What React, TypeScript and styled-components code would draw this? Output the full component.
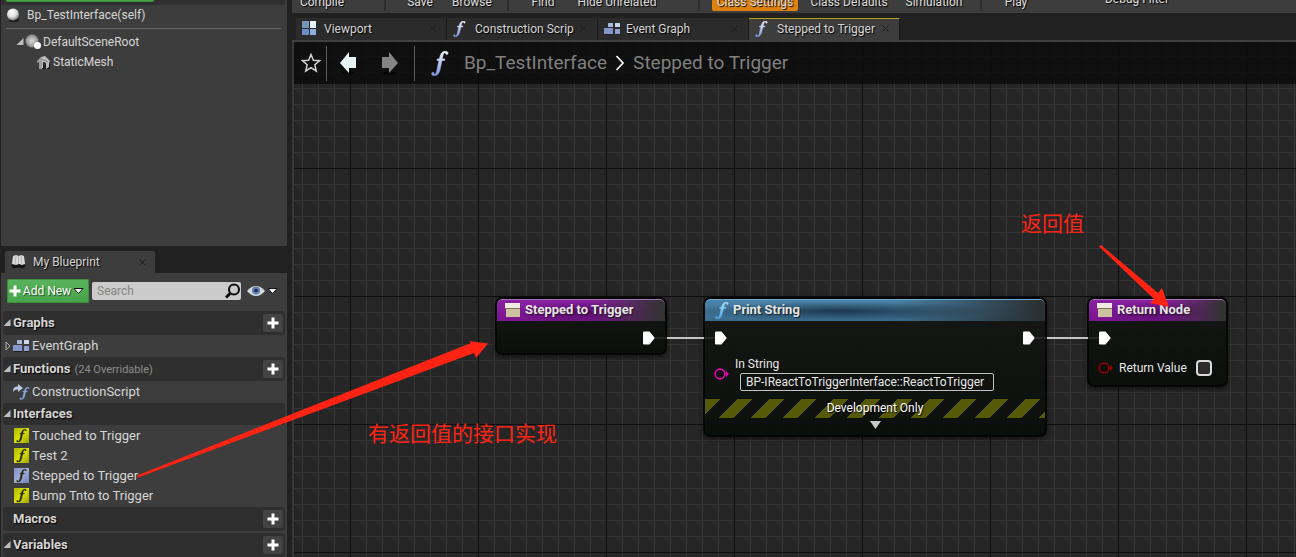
import React from "react";
import styled, { createGlobalStyle, css } from "styled-components";

const Global = createGlobalStyle`
  *, *::before, *::after { box-sizing: border-box; }
  body { margin: 0; background: #212121; overflow: hidden; }
  button, input { font: inherit; color: inherit; }
  ul { list-style: none; margin: 0; padding: 0; }
  h2, h3, p { margin: 0; font: inherit; }
`;

const Page = styled.div`
  position: relative;
  display: grid;
  grid-template-columns: 287px minmax(0, 1fr);
  column-gap: 5px;
  height: 100vh;
  overflow: hidden;
  background: #212121;
  color: #d6d6d6;
  font: 13px/20px Roboto, "Noto Sans CJK SC", sans-serif;
`;

const Sidebar = styled.aside`
  display: flex;
  flex-direction: column;
  padding-left: 1px;
  min-height: 0;
`;

const ComponentsPanel = styled.section`
  height: 246px;
  flex: none;
  background: #3d3d3d;
  font-size: 12px;
`;

const AddComponentBar = styled.div`
  height: 5px;
  display: flex;
  align-items: flex-end;
  padding: 0 0 3px 5px;
  margin-right: 2px;
  overflow: hidden;
  background: #303030;
`;

const AddComponentButton = styled.button`
  width: 148px;
  height: 22px;
  flex: none;
  padding: 0;
  border: 0;
  border-bottom: 1px solid #3c8f3f;
  border-radius: 2px;
  background: #4aa64d;
`;

const SelfRow = styled.div`
  display: flex;
  align-items: center;
  gap: 7px;
  height: 24px;
  margin: 0 6px 3px 5px;
  padding-bottom: 4px;
  border-bottom: 1px solid #6a6a6a;
`;

const Tree = styled.ul``;

const TreeRow = styled.li<{ $indent: number }>`
  display: flex;
  align-items: center;
  gap: 1px;
  height: 20px;
  padding-left: ${(p) => p.$indent}px;
`;

const BlueprintTabs = styled.div`
  display: flex;
  padding: 5px 0 0 4px;
  flex: none;
`;

const BlueprintTab = styled.div`
  display: flex;
  align-items: center;
  width: 150px;
  height: 22px;
  padding: 0 8px 0 6px;
  gap: 7px;
  border-radius: 2px 2px 0 0;
  background: #3d3d3d;
  font-size: 12px;
  text-shadow: 1px 1px 1px #000;
`;

const CloseButton = styled.button`
  margin-left: auto;
  width: 9px;
  height: 9px;
  flex: none;
  display: flex;
  padding: 0;
  border: 0;
  background: none;
  color: #181818;
`;

const BlueprintPanel = styled.section`
  flex: 1;
  min-height: 0;
  background: #3d3d3d;
  overflow: hidden;
`;

const SearchBar = styled.div`
  display: flex;
  align-items: center;
  height: 38px;
  padding: 0 8px 2px 6px;
  gap: 3px;
`;

const AddNew = styled.button`
  display: flex;
  align-items: center;
  justify-content: space-between;
  width: 82px;
  flex: none;
  height: 24px;
  padding: 0 4px 0 1px;
  border: 1px solid #3c9140;
  border-radius: 1px;
  background: linear-gradient(#58b25b, #48a44b);
  color: #fff;
  font-size: 12px;
  white-space: nowrap;
  text-shadow: 1px 1px 1px #244f25;
`;

const SearchField = styled.label`
  display: flex;
  align-items: center;
  width: 149px;
  flex: none;
  height: 18px;
  padding: 0 1px 0 5px;
  border-radius: 2px;
  background: #cbcbcb;
`;

const SearchInput = styled.input`
  flex: 1;
  min-width: 0;
  height: 18px;
  padding: 0;
  border: 0;
  outline: 0;
  background: none;
  font-size: 12px;
  color: #222;
  &::placeholder { color: #858585; opacity: 1; }
`;

const ViewButton = styled.button`
  display: flex;
  align-items: center;
  gap: 2px;
  margin-left: 3px;
  padding: 0;
  border: 0;
  background: none;
`;

const SectionHead = styled.h3<{ $compact?: boolean }>`
  display: flex;
  align-items: center;
  height: ${(p) => (p.$compact ? 22 : 24)}px;
  margin: 0 2px;
  padding-right: 2px;
  border-radius: 3px;
  background: #2f2f2f;
  font-weight: 700;
  text-shadow: 1px 1px 1px #000;
`;

const Twisty = styled.span`
  width: 10px;
  height: 12px;
  display: flex;
  align-items: center;
`;

const Hint = styled.span`
  margin-left: 4px;
  padding-top: 2px;
  font-size: 11px;
  font-weight: 400;
  color: #8c8c8c;
  text-shadow: none;
`;

const PlusButton = styled.button`
  display: flex;
  align-items: center;
  justify-content: center;
  width: 20px;
  height: 18px;
  margin-left: auto;
  padding: 0;
  border: 0;
  border-radius: 2px;
  background: #434343;
`;

const ItemList = styled.ul`
  padding: 1px 0;
`;

const Item = styled.li<{ $expandable?: boolean }>`
  display: flex;
  align-items: center;
  gap: 2px;
  height: 20px;
  padding-left: ${(p) => (p.$expandable ? 4 : 11)}px;
`;

const Spacer = styled.div`
  height: 2px;
`;

const Main = styled.main`
  display: flex;
  flex-direction: column;
  min-width: 0;
  min-height: 0;
`;

const Toolbar = styled.nav`
  display: flex;
  align-items: flex-end;
  height: 13px;
  flex: none;
  overflow: hidden;
  background: #3d3d3d;
  font-size: 12px;
  line-height: 16px;
  color: #dedede;
  text-shadow: 1px 1px 1px #000;
`;

const ToolButton = styled.button<{ $w: number; $active?: boolean; $raised?: boolean }>`
  display: flex;
  justify-content: center;
  width: ${(p) => p.$w}px;
  flex: none;
  height: 18px;
  margin-bottom: ${(p) => (p.$raised ? 5 : 2)}px;
  padding: 1px 0;
  border: 0;
  border-radius: 2px;
  background: ${(p) => (p.$active ? "#de820d" : "none")};
  text-shadow: inherit;
  white-space: nowrap;
`;

const DebugGroup = styled.div`
  display: flex;
  margin-left: 48px;
`;

const ToolDivider = styled.span<{ $before: number; $after: number }>`
  width: 2px;
  flex: none;
  height: 11px;
  margin: 0 ${(p) => p.$after}px 2px ${(p) => p.$before}px;
  background: #2d2d2d;
`;

const TabStrip = styled.div`
  display: flex;
  height: 29px;
  flex: none;
  padding: 5px 0 0 4px;
  border-bottom: 2px solid #414141;
`;

const Tab = styled.div<{ $active?: boolean }>`
  display: flex;
  align-items: center;
  width: 151px;
  flex: none;
  padding: 0 9px 2px 6px;
  border-right: 1px solid #1a1a1a;
  background: ${(p) => (p.$active ? "#3d3d3d" : "#2b2b2b")};
  border-top: 1px solid ${(p) => (p.$active ? "#b9a116" : "#2b2b2b")};
  font-size: 12px;
  text-shadow: 1px 1px 1px #000;
  white-space: nowrap;
`;

const TabIcon = styled.span`
  display: flex;
  width: 22px;
`;

const GraphFrame = styled.div`
  display: flex;
  flex: 1;
  min-height: 0;
  padding-left: 2px;
  background: #383838;
`;

const Graph = styled.section`
  position: relative;
  flex: 1;
  min-width: 0;
  overflow: hidden;
  background-color: #262626;
  background-image:
    linear-gradient(90deg, #0d0d0d 1px, transparent 1px),
    linear-gradient(#0d0d0d 1px, transparent 1px),
    linear-gradient(90deg, #353535 1px, transparent 1px),
    linear-gradient(#353535 1px, transparent 1px);
  background-size: 128px 128px, 128px 128px, 16px 16px, 16px 16px;
  background-position: 56px 0, 0 126px, 8px 0, 0 14px;
`;

const Crumbs = styled.header`
  display: flex;
  align-items: center;
  height: 42px;
  padding-left: 6px;
  background: rgba(10, 10, 10, 0.8);
  font-size: 19px;
  line-height: 24px;
  color: #808080;
`;

const IconButton = styled.button<{ $w: number }>`
  display: flex;
  align-items: center;
  justify-content: center;
  width: ${(p) => p.$w}px;
  padding: 0;
  border: 0;
  background: none;
`;

const CrumbRule = styled.span`
  width: 1px;
  height: 35px;
  background: #5c5c5c;
`;

const NavGroup = styled.div`
  display: flex;
  margin: 0 3px 0 5px;
`;

const CrumbLink = styled.a`
  color: inherit;
  text-decoration: none;
  padding-bottom: 1px;
`;

const CrumbArrow = styled.span`
  display: flex;
  justify-content: center;
  width: 26px;
`;

const Node = styled.article<{ $x: number; $y: number; $w: number; $h: number }>`
  position: absolute;
  left: ${(p) => p.$x}px;
  top: ${(p) => p.$y}px;
  width: ${(p) => p.$w}px;
  height: ${(p) => p.$h}px;
  overflow: hidden;
  border: 2px solid #060606;
  border-radius: 7px;
  background: linear-gradient(rgba(20, 23, 20, 0.94), rgba(10, 14, 10, 0.96));
  box-shadow: 0 2px 5px rgba(0, 0, 0, 0.5);
  color: #e6e6e6;
`;

const NodeHead = styled.h2<{ $tone: "purple" | "blue" }>`
  display: flex;
  align-items: center;
  gap: 4px;
  height: 22px;
  padding-left: 7px;
  border-radius: 5px 5px 0 0;
  font-weight: 700;
  font-size: 13px;
  text-shadow: 1px 1px 1px rgba(0, 0, 0, 0.6);
  ${(p) =>
    p.$tone === "purple"
      ? css`
          background:
            linear-gradient(90deg, transparent 55%, #343234 97%),
            radial-gradient(ellipse at 50% 60%, rgba(45, 5, 60, 0.55), transparent 60%),
            linear-gradient(#8a22a3, #7a1490);
          box-shadow: inset 0 1px 0 #a873b5;
        `
      : css`
          background:
            linear-gradient(90deg, transparent 55%, #2a3236 98%),
            radial-gradient(ellipse at 40% 55%, rgba(20, 40, 58, 0.8), transparent 55%),
            linear-gradient(#4c86ac, #3a6b8c);
          box-shadow: inset 0 1px 0 #6fa9ca;
        `}
`;

const NodeGlyph = styled.span`
  display: flex;
  justify-content: flex-end;
  width: 17px;
`;

const PinRow = styled.div<{ $end?: boolean }>`
  display: flex;
  align-items: center;
  justify-content: ${(p) => (p.$end ? "flex-end" : "space-between")};
  height: 34px;
  padding: 0 10px;
`;

const ParamRow = styled.div`
  display: flex;
  align-items: center;
  height: 35px;
  margin-top: 1px;
  padding-left: 9px;
  gap: 6px;
  font-size: 12px;
`;

const Param = styled.label`
  display: flex;
  flex-direction: column;
  align-items: flex-start;
  line-height: 17px;
`;

const ParamInput = styled.input`
  width: 254px;
  height: 18px;
  margin-left: 5px;
  padding: 0 5px;
  border: 1px solid #c4c4c4;
  border-radius: 2px;
  outline: 0;
  background: #101210;
  font-size: 12px;
`;

const DevBanner = styled.p`
  height: 19px;
  margin-top: 8px;
  line-height: 18px;
  font-size: 12px;
  text-align: center;
  color: #fff;
  text-shadow: 1px 1px 1px #000;
  background-color: #0f120c;
  background-image: linear-gradient(
    135deg,
    #565a08 0 24%,
    transparent 24% 50%,
    #565a08 50% 74%,
    transparent 74%
  );
  background-size: 32px 32px;
`;

const Expand = styled.button`
  display: flex;
  margin: 3px auto 0;
  padding: 0;
  border: 0;
  background: none;
`;

const BoolRow = styled.label`
  display: flex;
  align-items: center;
  height: 26px;
  padding-left: 9px;
  font-size: 12px;
`;

const BoolText = styled.span`
  width: 77px;
  margin-left: 6px;
`;

const CheckBox = styled.input`
  appearance: none;
  width: 16px;
  height: 16px;
  margin: 0;
  border: 2px solid #d9d9d9;
  border-radius: 4px;
  background: #2c2c2c;
`;

const Overlay = styled.svg`
  position: absolute;
  left: 0;
  top: 0;
  pointer-events: none;
`;

const Note = styled.p<{ $x: number; $y: number }>`
  position: absolute;
  left: ${(p) => p.$x}px;
  top: ${(p) => p.$y}px;
  font-family: "Noto Sans CJK SC", sans-serif;
  font-size: 21px;
  line-height: 28px;
  color: #ff2314;
  white-space: nowrap;
`;

const F_PATH =
  "M14.6 1.2c1.700 0 2.700.6 2.500 1.700-.2.900-1.700 1.100-1.900.2-.1-.5-.3-.8-.8-.8-1.100 0-1.600 1.300-2.100 3.400l-.3 1.300h2.300l-.3 1.200h-2.300l-1.500 6.300c-.9 3.600-2.600 5.300-5.200 5.300-1.700 0-2.700-.8-2.400-1.900.3-1 1.800-1 1.900 0 .1.500.3.800.8.800 1 0 1.500-1.200 2.100-3.600l1.700-6.900H7.300l.3-1.200h1.900C10.300 3.500 11.700 1.200 14.600 1.200z";

const FIcon = ({ w, h, id, from = "#f2f6ff", to = "#7b95dd" }: { w: number; h: number; id: string; from?: string; to?: string }) => (
  <svg width={w} height={h} viewBox="2 1 16 19" preserveAspectRatio="none" aria-hidden="true">
    <defs>
      <linearGradient id={id} x1="0" y1="0" x2="0" y2="1">
        <stop offset="0" stopColor={from} />
        <stop offset="1" stopColor={to} />
      </linearGradient>
    </defs>
    <path d={F_PATH} fill={`url(#${id})`} stroke={`url(#${id})`} strokeWidth=".5" />
  </svg>
);

const FunctionTile = ({ id, blue }: { id: string; blue?: boolean }) => (
  <svg width="18" height="16" viewBox="0 0 18 16" aria-hidden="true">
    <defs>
      <linearGradient id={id} x1="0" y1="0" x2="1" y2="1">
        <stop offset="0" stopColor={blue ? "#8292c9" : "#aeb700"} />
        <stop offset=".5" stopColor={blue ? "#9dabd8" : "#dce100"} />
        <stop offset="1" stopColor={blue ? "#7183bd" : "#9aa200"} />
      </linearGradient>
    </defs>
    <rect x="2" y="0" width="15" height="15" fill={`url(#${id})`} />
    <path d={F_PATH} transform="translate(2.800 .4) scale(.68 .69)" fill="#24280c" stroke="#24280c" strokeWidth=".4" />
  </svg>
);

const GraphIcon = () => (
  <svg width="17" height="14" viewBox="0 0 17 14" aria-hidden="true">
    <rect x="4" y="1" width="5" height="4" rx=".5" fill="#a9b6da" />
    <rect x="11" y="1" width="5" height="4" rx=".5" fill="#cdd6ee" />
    <rect x="0" y="6" width="9" height="6" rx=".5" fill="#8495cb" />
    <rect x="11" y="7" width="5" height="5" rx=".5" fill="#91a1d4" />
    <path d="M1 12.500h8M12 12.500h4" stroke="#1d1d1d" />
  </svg>
);

const ViewportIcon = () => (
  <svg width="15" height="15" viewBox="0 0 15 15" aria-hidden="true">
    <rect width="7" height="7" fill="#7696b8" />
    <rect x="8" width="6" height="7" fill="#e8f3fb" />
    <rect y="8" width="7" height="6" fill="#6a8ec7" />
    <rect x="8" y="8" width="6" height="6" fill="#8eaede" />
  </svg>
);

const ConstructionIcon = () => (
  <svg width="18" height="16" viewBox="0 0 18 16" aria-hidden="true">
    <path d="M1 8c0-4 1.500-5.500 5-5.500V0l5 4-5 4V5.500C4 5.500 2 6 1 8z" fill="#b9cbe2" />
    <path d={F_PATH} transform="translate(6 2.500) scale(.66 .66)" fill="#8ca6e3" stroke="#8ca6e3" strokeWidth=".5" />
  </svg>
);

const Sphere = () => (
  <svg width="14" height="14" viewBox="0 0 14 14" aria-hidden="true">
    <defs>
      <radialGradient id="ball" cx=".4" cy=".3" r=".7">
        <stop offset="0" stopColor="#fff" />
        <stop offset=".6" stopColor="#dcdcdc" />
        <stop offset="1" stopColor="#777" />
      </radialGradient>
    </defs>
    <ellipse cx="8" cy="12" rx="5" ry="2" fill="#1c1c1c" />
    <circle cx="7" cy="6.500" r="6" fill="url(#ball)" />
  </svg>
);

const SceneIcon = () => (
  <svg width="17" height="16" viewBox="0 0 17 16" aria-hidden="true">
    <defs>
      <radialGradient id="scene" cx=".5" cy=".5" r=".5">
        <stop offset="0" stopColor="#d8d8d8" />
        <stop offset="1" stopColor="#8b8b8b" />
      </radialGradient>
    </defs>
    <circle cx="7" cy="7" r="6.500" fill="url(#scene)" />
    <circle cx="12.500" cy="11.500" r="3.500" fill="#fff" />
  </svg>
);

const HouseIcon = () => (
  <svg width="16" height="15" viewBox="0 0 16 15" aria-hidden="true">
    <path d="M5 14h9v-5l-4-2z" fill="#181818" />
    <path d="M1 6l4-4 1 1v11H3V7L1 8z" fill="#9c9c9c" />
    <path d="M5 2l4-1 5 5-1 1.500V12l-3 2V8L7 7v6H6V4z" fill="#bdbdbd" />
    <path d="M7 7l2 1v6H7z" fill="#242424" />
    <path d="M6 4l6 3" stroke="#6c6c6c" strokeWidth=".8" />
  </svg>
);

const BookIcon = () => (
  <svg width="15" height="16" viewBox="0 0 15 16" aria-hidden="true">
    <path d="M0 11l2-1h11l2 2-3 2.500-5-1-5 1z" fill="#141414" />
    <path d="M2 2l3-1 3 1 2-1 3 1 1 8-3 1-3-1-3 1-4-1z" fill="#d9d9d9" />
    <path d="M5 1.500l-1 9M7.500 2v8M10 1.500l1 9" stroke="#a8a8a8" fill="none" strokeWidth=".8" />
  </svg>
);

const Close = ({ label }: { label: string }) => (
  <CloseButton aria-label={`Close ${label}`}>
    <svg width="9" height="9" viewBox="0 0 9 9">
      <path d="M1.500 1.500l6 6M7.500 1.500l-6 6" stroke="currentColor" strokeWidth=".8" />
    </svg>
  </CloseButton>
);

const Plus = () => (
  <svg width="12" height="12" viewBox="0 0 12 12" aria-hidden="true">
    <path d="M4.500 .5h3v4h4v3h-4v4h-3v-4h-4v-3h4z" fill="#fff" />
  </svg>
);

const CaretDown = () => (
  <svg width="11" height="8" viewBox="0 0 11 8" aria-hidden="true">
    <path d="M1 1.500h9l-4.500 5z" fill="#fff" stroke="#151515" />
  </svg>
);

const OpenTwisty = () => (
  <svg width="8" height="8" viewBox="0 0 8 8" aria-hidden="true">
    <path d="M7.500 0v7H.5z" fill="#bdbdbd" />
  </svg>
);

const ClosedTwisty = () => (
  <svg width="6" height="10" viewBox="0 0 6 10" aria-hidden="true">
    <path d="M1 1l4 4-4 4z" fill="none" stroke="#b0b0b0" />
  </svg>
);

const ExecPin = () => (
  <svg width="12" height="14" viewBox="0 0 12 14" aria-hidden="true">
    <path d="M1 .5h5.500L11.800 7l-5.300 6.500H1q-1 0-1-1v-11q0-1 1-1z" fill="#fff" />
  </svg>
);

const DataPin = ({ color }: { color: string }) => (
  <svg width="15" height="12" viewBox="0 0 15 12" aria-hidden="true">
    <circle cx="6" cy="6" r="4.800" fill="#0b0b0b" stroke={color} strokeWidth="1.700" />
    <path d="M12 3l2.800 3L12 9z" fill={color} />
  </svg>
);

const EntryIcon = () => (
  <svg width="17" height="16" viewBox="0 0 17 16" aria-hidden="true">
    <rect x="1" y="1" width="15" height="5" fill="#efece2" />
    <rect x="1" y="6" width="15" height="1" fill="#7a705c" />
    <rect x="2" y="7" width="14" height="8" fill="#cdc3a0" />
  </svg>
);

const NavArrow = ({ forward }: { forward?: boolean }) => (
  <svg width="18" height="24" viewBox="0 0 18 24" aria-hidden="true">
    <ellipse cx="9" cy="22" rx="7" ry="1.500" fill="#050505" />
    {forward ? (
      <path d="M1 6h7V1l9 11-9 10v-5H1z" fill="#858585" />
    ) : (
      <path d="M17 6h-7V1L1 12l9 10v-5h7z" fill="#e6f4f6" />
    )}
  </svg>
);

const interfaces = [
  { name: "Touched to Trigger" },
  { name: "Test 2" },
  { name: "Stepped to Trigger", blue: true },
  { name: "Bump Tnto to Trigger" },
];

export default function App() {
  return (
    <Page>
      <Global />
      <Sidebar>
        <ComponentsPanel>
          <AddComponentBar>
            <AddComponentButton aria-label="Add Component" />
          </AddComponentBar>
          <SelfRow>
            <Sphere />
            Bp_TestInterface(self)
          </SelfRow>
          <Tree>
            <TreeRow $indent={15}>
              <OpenTwisty />
              <SceneIcon />
              DefaultSceneRoot
            </TreeRow>
            <TreeRow $indent={35}>
              <HouseIcon />
              StaticMesh
            </TreeRow>
          </Tree>
        </ComponentsPanel>
        <BlueprintTabs>
          <BlueprintTab>
            <BookIcon />
            My Blueprint
            <Close label="My Blueprint" />
          </BlueprintTab>
        </BlueprintTabs>
        <BlueprintPanel>
          <SearchBar>
            <AddNew>
              <Plus />
              Add New
              <CaretDown />
            </AddNew>
            <SearchField>
              <SearchInput placeholder="Search" aria-label="Search" />
              <svg width="15" height="16" viewBox="0 0 15 16" aria-hidden="true">
                <circle cx="9" cy="6.500" r="5" fill="none" stroke="#0c0c0c" strokeWidth="2" />
                <path d="M5.500 10L1 14.500" stroke="#0c0c0c" strokeWidth="3" />
              </svg>
            </SearchField>
            <ViewButton aria-label="View options">
              <svg width="18" height="12" viewBox="0 0 18 12" aria-hidden="true">
                <path d="M0 6Q4 1 9 1t9 5q-4 5-9 5T0 6z" fill="#d2d6dc" />
                <circle cx="9" cy="5.500" r="4" fill="#5e7fae" />
                <circle cx="9" cy="5.500" r="1.800" fill="#1d2c48" />
              </svg>
              <CaretDown />
            </ViewButton>
          </SearchBar>

          <SectionHead>
            <Twisty><OpenTwisty /></Twisty>
            Graphs
            <PlusButton aria-label="Add graph"><Plus /></PlusButton>
          </SectionHead>
          <ItemList>
            <Item $expandable>
              <ClosedTwisty />
              <GraphIcon />
              EventGraph
            </Item>
          </ItemList>

          <SectionHead>
            <Twisty><OpenTwisty /></Twisty>
            Functions
            <Hint>(24 Overridable)</Hint>
            <PlusButton aria-label="Add function"><Plus /></PlusButton>
          </SectionHead>
          <ItemList>
            <Item>
              <ConstructionIcon />
              ConstructionScript
            </Item>
          </ItemList>

          <SectionHead $compact>
            <Twisty><OpenTwisty /></Twisty>
            Interfaces
          </SectionHead>
          <ItemList>
            {interfaces.map((f, i) => (
              <Item key={f.name}>
                <FunctionTile id={`tile${i}`} blue={f.blue} />
                {f.name}
              </Item>
            ))}
          </ItemList>

          <SectionHead>
            <Twisty />
            Macros
            <PlusButton aria-label="Add macro"><Plus /></PlusButton>
          </SectionHead>
          <Spacer />
          <SectionHead>
            <Twisty><OpenTwisty /></Twisty>
            Variables
            <PlusButton aria-label="Add variable"><Plus /></PlusButton>
          </SectionHead>
        </BlueprintPanel>
      </Sidebar>

      <Main>
        <Toolbar>
          <ToolButton $w={60}>Compile</ToolButton>
          <ToolDivider $before={32} $after={9} />
          <ToolButton $w={50}>Save</ToolButton>
          <ToolButton $w={54}>Browse</ToolButton>
          <ToolDivider $before={8} $after={10} />
          <ToolButton $w={48}>Find</ToolButton>
          <ToolButton $w={100}>Hide Unrelated</ToolButton>
          <ToolDivider $before={31} $after={12} />
          <ToolButton $w={86} $active>Class Settings</ToolButton>
          <ToolButton $w={102}>Class Defaults</ToolButton>
          <ToolButton $w={68}>Simulation</ToolButton>
          <ToolDivider $before={12} $after={12} />
          <ToolButton $w={44}>Play</ToolButton>
          <DebugGroup>
            <ToolButton $w={102} $raised>Debug Filter</ToolButton>
          </DebugGroup>
        </Toolbar>
        <TabStrip>
          <Tab>
            <TabIcon><ViewportIcon /></TabIcon>
            Viewport
            <Close label="Viewport" />
          </Tab>
          <Tab>
            <TabIcon><FIcon id="f1" w={13} h={16} /></TabIcon>
            Construction Scrip
            <Close label="Construction Script" />
          </Tab>
          <Tab>
            <TabIcon><GraphIcon /></TabIcon>
            Event Graph
            <Close label="Event Graph" />
          </Tab>
          <Tab $active>
            <TabIcon><FIcon id="f2" w={13} h={16} /></TabIcon>
            Stepped to Trigger
            <Close label="Stepped to Trigger" />
          </Tab>
        </TabStrip>
        <GraphFrame>
          <Graph>
            <Crumbs>
              <IconButton $w={21} aria-label="Favorite">
                <svg width="20" height="20" viewBox="0 0 20 20">
                  <path d="M10 1.500l2.400 5.800 6.100.4-4.700 4 1.500 6.300-5.300-3.400L4.700 18l1.500-6.300-4.700-4 6.100-.4z" fill="none" stroke="#d0d0d0" strokeWidth="1.500" />
                </svg>
              </IconButton>
              <NavGroup>
                <CrumbRule />
                <IconButton $w={42} aria-label="Back"><NavArrow /></IconButton>
                <IconButton $w={42} aria-label="Forward"><NavArrow forward /></IconButton>
              </NavGroup>
              <CrumbRule />
              <IconButton $w={49} aria-label="Function"><FIcon id="f3" w={18} h={25} /></IconButton>
              <CrumbLink href="#">Bp_TestInterface</CrumbLink>
              <CrumbArrow>
                <svg width="10" height="16" viewBox="0 0 10 16" aria-hidden="true">
                  <path d="M1.500 1l6.500 7-6.500 7" fill="none" stroke="#f2f2f2" strokeWidth="1.800" />
                </svg>
              </CrumbArrow>
              <CrumbLink href="#">Stepped to Trigger</CrumbLink>
            </Crumbs>

            <Node $x={201} $y={255} $w={172} $h={58}>
              <NodeHead $tone="purple"><EntryIcon />Stepped to Trigger</NodeHead>
              <PinRow $end><ExecPin /></PinRow>
            </Node>

            <Node $x={409} $y={255} $w={344} $h={140}>
              <NodeHead $tone="blue">
                <NodeGlyph><FIcon id="f4" w={14} h={17} from="#a5e0ff" to="#4fa6e6" /></NodeGlyph>
                Print String
              </NodeHead>
              <PinRow><ExecPin /><ExecPin /></PinRow>
              <ParamRow>
                <DataPin color="#e800b4" />
                <Param>
                  In String
                  <ParamInput defaultValue="BP-IReactToTriggerInterface::ReactToTrigger" />
                </Param>
              </ParamRow>
              <DevBanner>Development Only</DevBanner>
              <Expand aria-label="Show advanced pins">
                <svg width="11" height="8" viewBox="0 0 11 8"><path d="M0 0h11L5.500 8z" fill="#c9c9c9" /></svg>
              </Expand>
            </Node>

            <Node $x={793} $y={255} $w={141} $h={90}>
              <NodeHead $tone="purple"><EntryIcon />Return Node</NodeHead>
              <PinRow><ExecPin /></PinRow>
              <BoolRow>
                <DataPin color="#930000" />
                <BoolText>Return Value</BoolText>
                <CheckBox type="checkbox" />
              </BoolRow>
            </Node>
          </Graph>
        </GraphFrame>
      </Main>

      <Overlay width="1296" height="557" viewBox="0 0 1296 557" aria-hidden="true">
        <path d="M667 338h37M1047 338h41" stroke="#c4c4c4" strokeWidth="2" />
        <path d="M655 338h12M704 338h11M1035 338h12M1088 338h11" stroke="#3a3a3a" strokeWidth="1" />
        <path d="M137 475.500L471 343L469 341L488 343.500L476 358L474 353L138 477.500z" fill="#ff2314" />
        <path d="M1099 246.500L1101 245L1158 293L1162 288L1169 307L1150 303L1154 299z" fill="#ff2314" />
      </Overlay>
      <Note $x={1021} $y={208}>返回值</Note>
      <Note $x={368} $y={418}>有返回值的接口实现</Note>
    </Page>
  );
}
